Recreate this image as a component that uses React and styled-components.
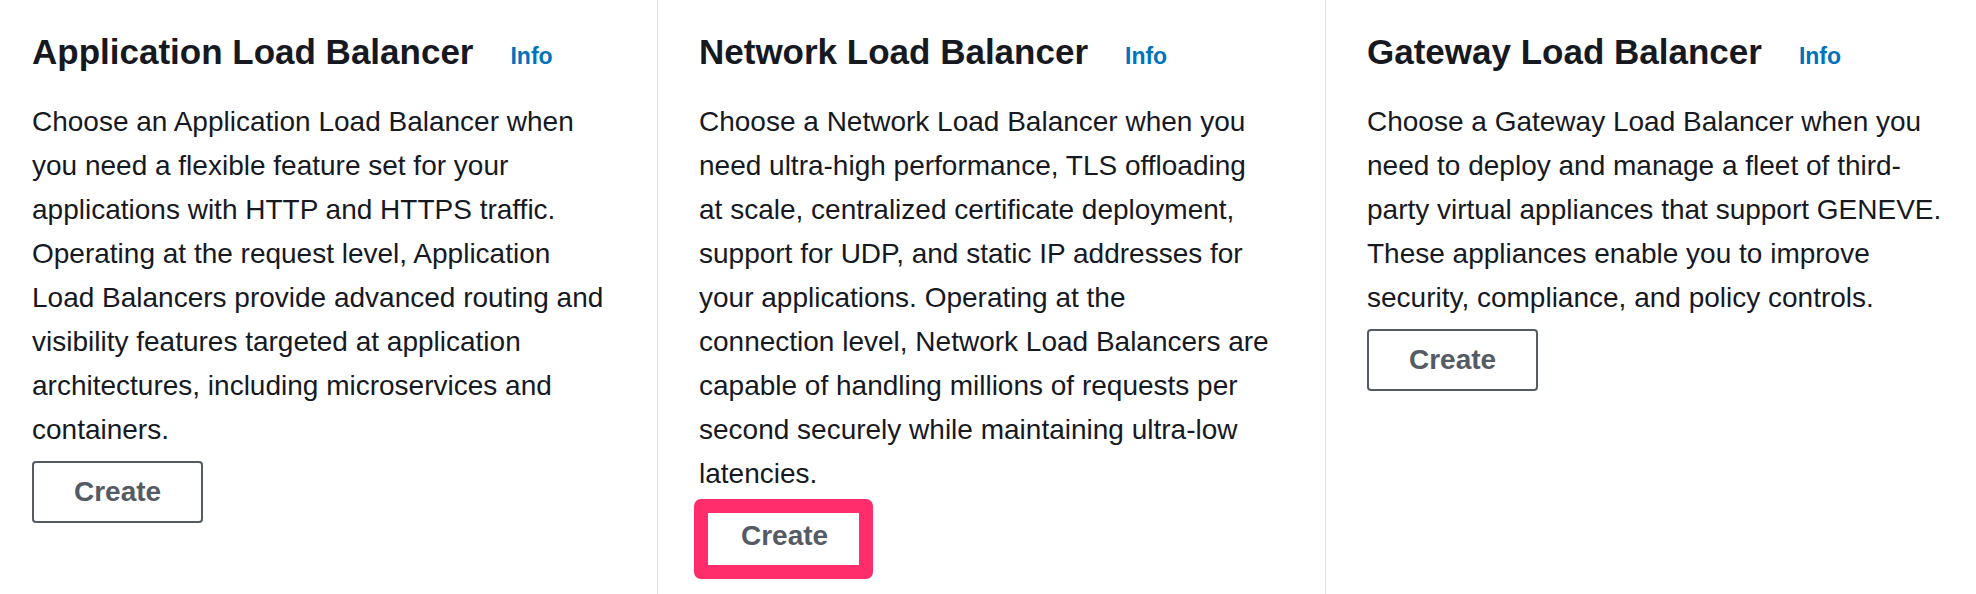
import React from 'react';
import styled, { createGlobalStyle } from 'styled-components';

// lines kept as in the console so the wrapping matches
const balancers = [
    {
        title: 'Application Load Balancer',
        lines: [
            'Choose an Application Load Balancer when',
            'you need a flexible feature set for your',
            'applications with HTTP and HTTPS traffic.',
            'Operating at the request level, Application',
            'Load Balancers provide advanced routing and',
            'visibility features targeted at application',
            'architectures, including microservices and',
            'containers.',
        ],
    },
    {
        title: 'Network Load Balancer',
        lines: [
            'Choose a Network Load Balancer when you',
            'need ultra-high performance, TLS offloading',
            'at scale, centralized certificate deployment,',
            'support for UDP, and static IP addresses for',
            'your applications. Operating at the',
            'connection level, Network Load Balancers are',
            'capable of handling millions of requests per',
            'second securely while maintaining ultra-low',
            'latencies.',
        ],
        highlighted: true,
    },
    {
        title: 'Gateway Load Balancer',
        lines: [
            'Choose a Gateway Load Balancer when you',
            'need to deploy and manage a fleet of third-',
            'party virtual appliances that support GENEVE.',
            'These appliances enable you to improve',
            'security, compliance, and policy controls.',
        ],
    },
];

export default function App() {
    return (
        <>
            <GlobalStyle />
            <ColumnsStyled>
                {balancers.map((balancer, index) => (
                    <ColumnStyled key={balancer.title} first={index === 0}>
                        <HeaderStyled>
                            <TitleStyled>{balancer.title}</TitleStyled>
                            <InfoLinkStyled href="#">Info</InfoLinkStyled>
                        </HeaderStyled>
                        <DescriptionStyled>
                            {balancer.lines.map((line) => (
                                <LineStyled key={line}>{line}</LineStyled>
                            ))}
                        </DescriptionStyled>
                        <CreateButtonStyled highlighted={balancer.highlighted}>Create</CreateButtonStyled>
                    </ColumnStyled>
                ))}
            </ColumnsStyled>
        </>
    );
}

const GlobalStyle = createGlobalStyle`
    html, body {
        margin: 0;
        padding: 0;
        background: #ffffff;
    }

    body {
        font-family: "Liberation Sans", Arial, sans-serif;
        color: #16191f;
    }
`;

const ColumnsStyled = styled.div`
    display: grid;
    grid-template-columns: 657px 668px 1fr;
    height: 594px;
    overflow: hidden;
`;

const ColumnStyled = styled.div`
    padding: 30px 20px 0 ${(props) => (props.first ? '32px' : '41px')};
    border-left: ${(props) => (props.first ? 'none' : '1px solid #dde1e4')};
    min-width: 0;
`;

const HeaderStyled = styled.div`
    display: flex;
    align-items: baseline;
    gap: 37px;
    height: 44px;
`;

const TitleStyled = styled.h2`
    margin: 0;
    font-size: 35px;
    line-height: 44px;
    font-weight: 700;
    color: #16191f;
    white-space: nowrap;
`;

const InfoLinkStyled = styled.a`
    font-size: 23px;
    line-height: 44px;
    font-weight: 700;
    color: #0073bb;
    text-decoration: none;
`;

const DescriptionStyled = styled.p`
    margin: 26px 0 0;
    font-size: 28px;
    line-height: 44px;
    color: #16191f;
`;

const LineStyled = styled.span`
    display: block;
    white-space: nowrap;
`;

const CreateButtonStyled = styled.button`
    position: relative;
    display: block;
    margin-top: 9px;
    padding: 7px 40px;
    border: 2px solid #545b64;
    border-radius: 4px;
    background: #ffffff;
    color: #545b64;
    font-family: "Liberation Sans", Arial, sans-serif;
    font-size: 28px;
    line-height: 44px;
    font-weight: 700;
    cursor: pointer;

    ${(props) =>
        props.highlighted &&
        `
        &::after {
            content: '';
            position: absolute;
            left: -7px;
            top: -8px;
            right: -5px;
            bottom: -14px;
            border: 14px solid #ff2d6b;
            border-radius: 7px;
        }
    `}
`;
